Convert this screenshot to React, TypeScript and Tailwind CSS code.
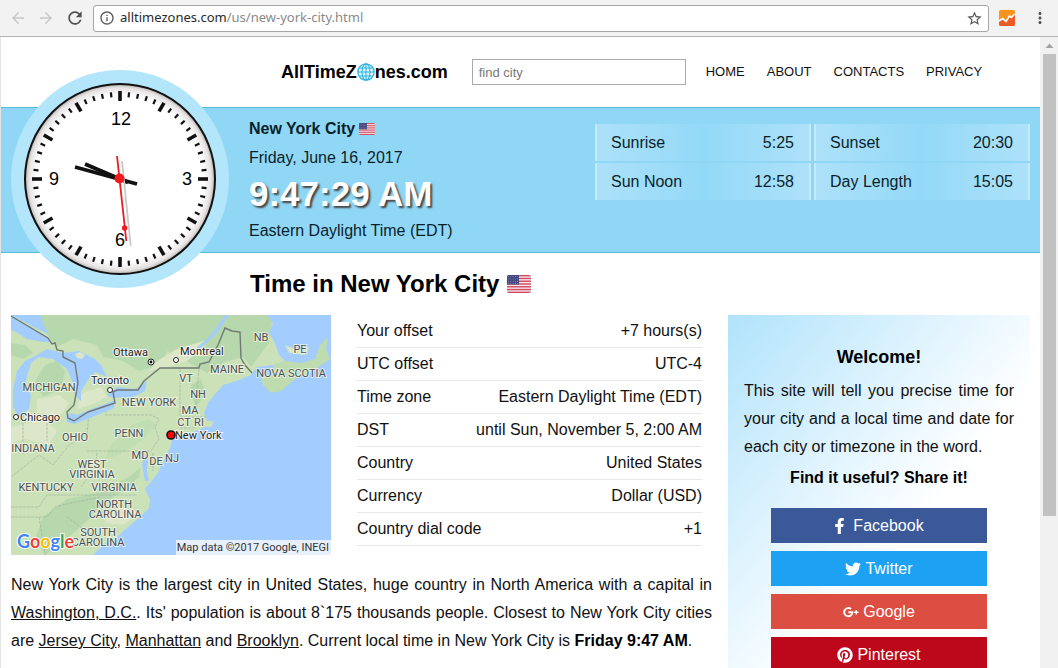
import React from 'react';
import { FaFacebookF, FaTwitter, FaPinterest } from 'react-icons/fa';
import { MdArrowBack, MdArrowForward, MdRefresh, MdInfoOutline, MdStarBorder, MdMoreVert } from 'react-icons/md';

const facts = [
  ['Your offset', '+7 hours(s)'],
  ['UTC offset', 'UTC-4'],
  ['Time zone', 'Eastern Daylight Time (EDT)'],
  ['DST', 'until Sun, November 5, 2:00 AM'],
  ['Country', 'United States'],
  ['Currency', 'Dollar (USD)'],
  ['Country dial code', '+1'],
];

const sunTimes = [
  ['Sunrise', '5:25'],
  ['Sunset', '20:30'],
  ['Sun Noon', '12:58'],
  ['Day Length', '15:05'],
];

const regionLabels: [string, number, number][] = [
  ['MICHIGAN', 38, 76],
  ['NEW YORK', 138, 91],
  ['VT', 175, 67],
  ['NH', 187, 83],
  ['MA', 179, 99],
  ['CT', 173, 111],
  ['RI', 188, 111],
  ['MAINE', 216, 58],
  ['NB', 250, 26],
  ['PE', 289, 38],
  ['NOVA SCOTIA', 280, 62],
  ['PENN', 118, 122],
  ['OHIO', 64, 126],
  ['INDIANA', 22, 137],
  ['MD', 129, 144],
  ['DE', 145, 150],
  ['NJ', 161, 147],
  ['WEST', 81, 153],
  ['VIRGINIA', 81, 163],
  ['KENTUCKY', 35, 176],
  ['VIRGINIA', 103, 176],
  ['NORTH', 103, 193],
  ['CAROLINA', 104, 203],
  ['SOUTH', 87, 221],
  ['CAROLINA', 87, 231],
];

const Flag: React.FC<{ className: string }> = ({ className }) => (
  <svg className={className} viewBox="0 0 24 18" preserveAspectRatio="none" aria-hidden="true">
    <clipPath id="flagShape">
      <rect width="24" height="18" rx="2" />
    </clipPath>
    <g clipPath="url(#flagShape)">
      <rect width="24" height="18" fill="#f5e9ec" />
      {[0, 1, 2, 3, 4, 5, 6].map((i) => (
        <rect key={i} y={i * 2.77} width="24" height="1.39" fill="#d0485c" />
      ))}
      <rect width="12" height="9.5" fill="#45457f" />
      {[1.6, 3.9, 6.2, 8.3].map((y) =>
        [1.5, 3.8, 6.1, 8.4, 10.6].map((x) => <circle key={`${x}-${y}`} cx={x} cy={y} r="0.45" fill="#c9c9e0" />)
      )}
    </g>
  </svg>
);

const Globe: React.FC = () => (
  <svg className="h-[18px] w-[18px]" viewBox="0 0 17 17" fill="none" stroke="#2bb3e0" aria-hidden="true">
    <circle cx="8.5" cy="8.5" r="7.7" fill="#e2f6fd" strokeWidth="1.2" />
    <ellipse cx="8.5" cy="8.5" rx="3.8" ry="7.7" />
    <path d="M8.5 1v15M1 8.5h15M2.2 4.8h12.6M2.2 12.2h12.6" />
  </svg>
);

const GooglePlus: React.FC = () => (
  <svg className="h-4 w-4" viewBox="0 0 16 16" fill="none" stroke="#fff" aria-hidden="true">
    <path d="M8 5.1A4.1 4.1 0 1 0 9.4 8.2H5.4" strokeWidth="1.9" />
    <path d="M13.3 6v4.4M11.1 8.2h4.4" strokeWidth="1.4" />
  </svg>
);

const BrowserBar: React.FC = () => (
  <div className="flex h-[37px] shrink-0 items-center border-b border-[#b3b3b3] bg-[#f2f2f2] pl-[9px] pr-[9px]">
    <div className="flex items-center gap-[10px]">
      <button aria-label="Back"><MdArrowBack className="h-[18px] w-[18px] text-[#c8c8c8]" /></button>
      <button aria-label="Forward"><MdArrowForward className="h-[18px] w-[18px] text-[#c8c8c8]" /></button>
      <button aria-label="Reload"><MdRefresh className="h-5 w-5 text-[#4f4f4f]" /></button>
    </div>
    <div className="ml-2 flex h-[27px] flex-1 items-center rounded-[3px] border border-[#a6a6a6] bg-white pl-[5px] pr-[5px]">
      <MdInfoOutline className="h-4 w-4 text-[#5a5a5a]" />
      <span className="ml-[5px] flex-1 font-['Noto_Sans',sans-serif] text-[13px] text-[#2a2a2a]">
        alltimezones.com<span className="text-[#8a8a8a]">/us/new-york-city.html</span>
      </span>
      <button aria-label="Bookmark"><MdStarBorder className="h-[17px] w-[17px] text-[#555]" /></button>
    </div>
    <button aria-label="Analytics" className="ml-[10px]">
      <svg className="h-4 w-4" viewBox="0 0 16 16">
        <rect width="16" height="16" rx="2" fill="#f7931e" />
        <path d="M0 11l4-2 3 3 4-5 2 1 3-4v10a2 2 0 0 1-2 2H2a2 2 0 0 1-2-2z" fill="#ee5a24" />
        <path d="M0 11l3.500-2.500L7 11.500l3.500-5.500 2 1.500L15.500 4" fill="none" stroke="#fff" strokeWidth="1.6" />
      </svg>
    </button>
    <button aria-label="Menu" className="ml-4"><MdMoreVert className="h-[18px] w-[18px] text-[#4f4f4f]" /></button>
  </div>
);

const Clock: React.FC = () => (
  <svg className="h-[218px] w-[218px]" viewBox="0 0 218 218" role="img" aria-label="Clock">
    <defs>
      <radialGradient id="face">
        <stop offset="0.88" stopColor="#fff" />
        <stop offset="0.96" stopColor="#e6e3e3" />
        <stop offset="1" stopColor="#b5b0b0" />
      </radialGradient>
    </defs>
    <circle cx="109" cy="109" r="109" fill="#b3e5fb" />
    <circle cx="109" cy="109" r="95" fill="url(#face)" stroke="#111" strokeWidth="2" />
    {Array.from({ length: 60 }, (_, i) => (
      <line
        key={i}
        x1="109"
        x2="109"
        y1={i % 5 ? 22 : 21}
        y2={i % 5 ? 27 : 31}
        stroke="#111"
        strokeWidth={i % 5 ? 2.2 : 3.6}
        transform={`rotate(${i * 6} 109 109)`}
      />
    ))}
    <g className="font-['Liberation_Sans',sans-serif] text-[18px]" fill="#000" textAnchor="middle">
      <text x="110" y="55">12</text>
      <text x="176" y="115">3</text>
      <text x="109" y="176">6</text>
      <text x="43" y="115">9</text>
    </g>
    <path d="M74 94L117 112.500" stroke="#111" strokeWidth="4" />
    <path d="M64 97L126 114" stroke="#111" strokeWidth="3.600" />
    <path d="M111 91L119.700 176" stroke="#c9c9c9" strokeWidth="1.800" />
    <path d="M106 86L115.300 171" stroke="#ee1c1c" strokeWidth="1.800" />
    <circle cx="108.500" cy="108.500" r="5" fill="#ee1c1c" />
    <circle cx="113.600" cy="158" r="2.700" fill="#ee1c1c" />
  </svg>
);

const RegionMap: React.FC = () => (
  <svg className="h-[240px] w-[320px] shrink-0" viewBox="0 0 320 240" role="img" aria-label="Map of New York City">
    <rect width="320" height="240" fill="#cbe2b9" />
    {/* forests and farmland */}
    <g fill="#b7d8ac">
      <path d="M26 0H262L258 28 240 52 232 42 214 47 196 58 186 52 156 36 150 50 128 56 112 46 92 42 86 30 62 24 46 32 38 22Z" />
      <path d="M34 50L46 46 54 56 50 74 32 82 24 66Z" />
      <path d="M118 162L130 152 128 162 112 176 92 188 76 206 60 220 46 232 34 240 24 224 32 202 56 184 84 178Z" />
      <path d="M180 70L190 64 194 78 186 92 180 82Z" />
      <path d="M0 28L14 30 22 38 12 44 0 40Z" />
    </g>
    <path d="M120 110L138 104 146 110 130 126 108 140 94 144 100 130Z" fill="#c1ddb2" />
    <g fill="#dce6c8">
      <path d="M146 46L166 34 186 28 198 24 186 38 176 46 156 52 138 56Z" />
      <path d="M72 78L90 72 96 82 80 90 66 94 68 84Z" />
      <path d="M0 112L34 104 46 116 38 130 14 124 0 128Z" />
      <path d="M26 84L48 80 58 88 50 100 26 98Z" />
      <path d="M90 200L112 192 130 198 112 210 96 208Z" />
    </g>
    <g fill="none" stroke="#a4b3a0" strokeWidth="0.700" strokeDasharray="3 1">
      <path d="M0 162L28 140 42 150 58 130 76 120 78 96M12 100V140M36 100V126M0 192H28L36 180 126 180M0 202H36L44 192 60 188 90 182M28 202L34 240M76 136H140L148 124 144 112 148 104 140 100H95V94M56 202L72 214 92 226M169 54V102M188 54L184 98M169 102H197M169 113H190M86 138L84 152 70 172M142 138V156" />
    </g>
    {/* Atlantic and the gulf */}
    <g fill="#a3ccff">
      <path d="M256 0L262 8 258 18 264 28 268 40 274 46 262 50 246 52 240 60 225 66 212 70 203 80 197 88 193 98 196 106 203 106 200 112 190 112 175 117 162 120 160 130 156 140 150 150 147 158 140 167 134 174 139 184 138 193 129 202 117 212 106 222 92 230 82 240H320V0Z" />
      <path d="M134 138L137 146 136 156 138 166 134 166 131 150Z" />
      <path d="M0 0L37 23 39 27 32 27 16 24 5 17 0 15Z" />
      <path d="M0 0H29L33 10 38 20Z" />
      <path d="M6 56L14 46 22 42 36 34 52 38 68 36 84 44 90 50 96 62 84 57 76 66 70 76 70 86 64 80 62 68 56 54 42 44 28 42 20 48 14 68 20 80 18 94 8 102 2 92 2 74Z" />
      <path d="M55 102L60 98 66 100 86 92 104 85 103 93 79 103 63 109 56 107Z" />
      <path d="M96 80L106 72 124 74 136 66 134 76 122 82 102 83Z" />
      <path d="M214 0H218L204 20 184 38 182 36 200 20Z" />
      <path d="M62 62L66 66 69 72 66 74Z" />
    </g>
    <path d="M64 39l5-2 5 3-3 4-5-1z" fill="#dce6c8" />
    {/* Nova Scotia and Prince Edward Island */}
    <path d="M262 50L274 46 290 48 304 44 309 30 317 22 315 34 319 44 300 57 284 64 270 76 260 78 252 70 250 62 262 58Z" fill="#bfdcae" />
    <path d="M270 22L274 30 284 34 298 32 294 40 278 38Z" fill="#d4e6c6" />
    <path d="M167 117L178 115 199 107 190 114 170 121Z" fill="#c9e1b5" />
    <path
      d="M0 1L37 23 41 29 44 28 46 35 52 36 52 42 64 48 67 68 63 90 56 97 57 103 63 106 77 97 104 88 102 77 106 75 127 75 133 66 149 53 188 53 189 49 198 47 207 30 214 13 221 16 229 17 230 43 234 50 241 58"
      fill="none"
      stroke="#707a74"
      strokeWidth="1.400"
    />
    <g
      className="font-['Roboto',sans-serif] text-[11px]"
      fill="#4a4f55"
      stroke="#f4f8ee"
      strokeWidth="2"
      strokeOpacity="0.7"
      paintOrder="stroke"
      textAnchor="middle"
    >
      {regionLabels.map(([name, x, y]) => (
        <text key={`${name}-${y}`} x={x} y={y}>{name}</text>
      ))}
    </g>
    <g className="font-['Roboto',sans-serif] text-[11px]" fill="#1d1d1d" stroke="#fff" strokeWidth="2" strokeOpacity="0.8" paintOrder="stroke">
      <text x="102" y="41">Ottawa</text>
      <text x="169" y="40">Montreal</text>
      <text x="80" y="69">Toronto</text>
      <text x="9" y="106">Chicago</text>
      <text x="164" y="124">New York</text>
    </g>
    <g fill="#fff" stroke="#222">
      <circle cx="140" cy="47" r="3" />
      <circle cx="165" cy="45" r="2.500" />
      <circle cx="99" cy="75" r="2.500" />
      <circle cx="5" cy="102" r="2.500" />
    </g>
    <circle cx="140" cy="47" r="1.400" fill="#111" />
    <circle cx="160" cy="120" r="4" fill="#f00" stroke="#111" strokeWidth="1.600" />
    <text x="6" y="233" className="font-['Lato',sans-serif] text-[18px] font-bold" stroke="#fff" strokeWidth="2" paintOrder="stroke">
      <tspan fill="#4285f4">G</tspan>
      <tspan fill="#ea4335">o</tspan>
      <tspan fill="#fbbc05">o</tspan>
      <tspan fill="#4285f4">g</tspan>
      <tspan fill="#34a853">l</tspan>
      <tspan fill="#ea4335">e</tspan>
    </text>
    <rect x="165" y="225" width="155" height="15" fill="#e6effb" />
    <text x="318" y="236" textAnchor="end" className="font-['Roboto',sans-serif] text-[11px]" fill="#333">
      Map data ©2017 Google, INEGI
    </text>
  </svg>
);

const SiteHeader: React.FC = () => (
  <header className="flex h-[70px] items-center pl-[280px]">
    <a href="#" className="flex items-center text-[18px] font-bold text-black">
      AllTimeZ<Globe />nes.com
    </a>
    <input
      type="text"
      aria-label="find city"
      placeholder="find city"
      className="ml-6 h-[26px] w-[214px] border border-[#a9a9a9] px-[6px] text-[13px] placeholder:text-[#777]"
    />
    <nav className="ml-5 flex gap-[22px] text-[13px] text-[#111]">
      <a href="#">HOME</a>
      <a href="#">ABOUT</a>
      <a href="#">CONTACTS</a>
      <a href="#">PRIVACY</a>
    </nav>
  </header>
);

const TimeBand: React.FC = () => (
  <section className="relative flex items-start justify-between border-y border-[#5cbcdc] bg-[#90d7f6] pb-[7px] pl-[248px] pr-[10px] pt-[6px] text-[#0b1f2b]">
    <div className="absolute left-[10px] top-[-38px]">
      <Clock />
    </div>
    <div className="text-[16px] leading-[29px]">
      <div className="flex items-center gap-1">
        <strong>New York City</strong>
        <Flag className="h-3 w-4" />
      </div>
      <div>Friday, June 16, 2017</div>
      <div className="text-[35px] font-bold leading-[44px] text-white [text-shadow:2px_2px_2px_#444]">9:47:29 AM</div>
      <div>Eastern Daylight Time (EDT)</div>
    </div>
    <dl className="mt-[10px] grid w-[435px] grid-cols-2 gap-x-[3px] gap-y-[2px]">
      {sunTimes.map(([label, value]) => (
        <div
          key={label}
          className="flex h-[37px] items-center justify-between border-x-2 border-[#c3ebfc] bg-linear-to-r from-[#ade1f9] via-[#93d9f7] to-[#ade1f9] pl-[14px] pr-[15px]"
        >
          <dt>{label}</dt>
          <dd>{value}</dd>
        </div>
      ))}
    </dl>
  </section>
);

const Sidebar: React.FC = () => (
  <aside className="w-[302px] shrink-0 bg-linear-to-br from-[#b0e3fb] to-white to-60% px-4 pb-4 pt-7 leading-7">
    <h2 className="text-center text-[18px] font-bold text-black">Welcome!</h2>
    <p className="mt-[6px] text-justify">
      This site will tell you precise time for your city and a local time and date for each city or timezone in the word.
    </p>
    <p className="mt-[3px] text-center font-bold text-black">Find it useful? Share it!</p>
    <div className="mt-4 flex flex-col gap-2 px-[27px] text-white">
      <button className="flex h-[35px] items-center justify-center gap-2 bg-[#3b5998]">
        <FaFacebookF className="h-4 w-[11px]" />
        Facebook
      </button>
      <button className="flex h-[35px] items-center justify-center gap-1 bg-[#1da1f2]">
        <FaTwitter className="h-4 w-4" />
        Twitter
      </button>
      <button className="flex h-[35px] items-center justify-center gap-1 bg-[#dc4e41]">
        <GooglePlus />
        Google
      </button>
      <button className="flex h-[35px] items-center justify-center gap-1 bg-[#bd081c]">
        <FaPinterest className="h-4 w-4" />
        Pinterest
      </button>
    </div>
  </aside>
);

const App: React.FC = () => {
  return (
    <div className="flex h-screen flex-col overflow-hidden bg-white font-['Liberation_Sans',sans-serif] text-[16px] text-[#111]">
      <BrowserBar />
      <div className="flex min-h-0 flex-1">
        <div className="min-w-0 flex-1 overflow-hidden border-l border-[#e4e4e4]">
          <SiteHeader />
          <TimeBand />
          <main className="px-[10px]">
            <h1 className="flex h-[62px] items-center gap-2 pl-[239px] text-[24px] font-bold text-black">
              Time in New York City
              <Flag className="h-[18px] w-6" />
            </h1>
            <div className="flex items-start gap-4">
              <article className="min-w-0 flex-1">
                <div className="flex items-start gap-[26px] pr-[10px]">
                  <RegionMap />
                  <div className="min-w-0 flex-1">
                    <table className="w-full table-fixed border-separate border-spacing-0 whitespace-nowrap">
                      <tbody>
                        {facts.map(([label, value]) => (
                          <tr key={label} className="h-[33px]">
                            <th scope="row" className="w-[34%] border-b border-[#e8e8e8] text-left font-normal">{label}</th>
                            <td className="border-b border-[#e8e8e8] text-right">{value}</td>
                          </tr>
                        ))}
                      </tbody>
                    </table>
                  </div>
                </div>
                <p className="mt-4 text-justify leading-7">
                  New York City is the largest city in United States, huge country in North America with a capital in{' '}
                  <a href="#" className="underline">Washington, D.C.</a>. Its' population is about 8`175 thousands people.
                  Closest to New York City cities are <a href="#" className="underline">Jersey City</a>,{' '}
                  <a href="#" className="underline">Manhattan</a> and <a href="#" className="underline">Brooklyn</a>.
                  Current local time in New York City is <strong className="text-black">Friday 9:47 AM</strong>.
                </p>
              </article>
              <Sidebar />
            </div>
          </main>
        </div>
        {/* Scrollbar */}
        <div className="flex w-[18px] shrink-0 flex-col items-center bg-[#f1f1f1]">
          <svg className="h-[17px] w-[17px]" viewBox="0 0 17 17" aria-hidden="true">
            <path d="M4.500 11l4-4.500 4 4.500z" fill="#a3a3a3" />
          </svg>
          <div className="h-[462px] w-[13px] bg-[#c1c1c1]" />
        </div>
      </div>
    </div>
  );
};

export default App;
